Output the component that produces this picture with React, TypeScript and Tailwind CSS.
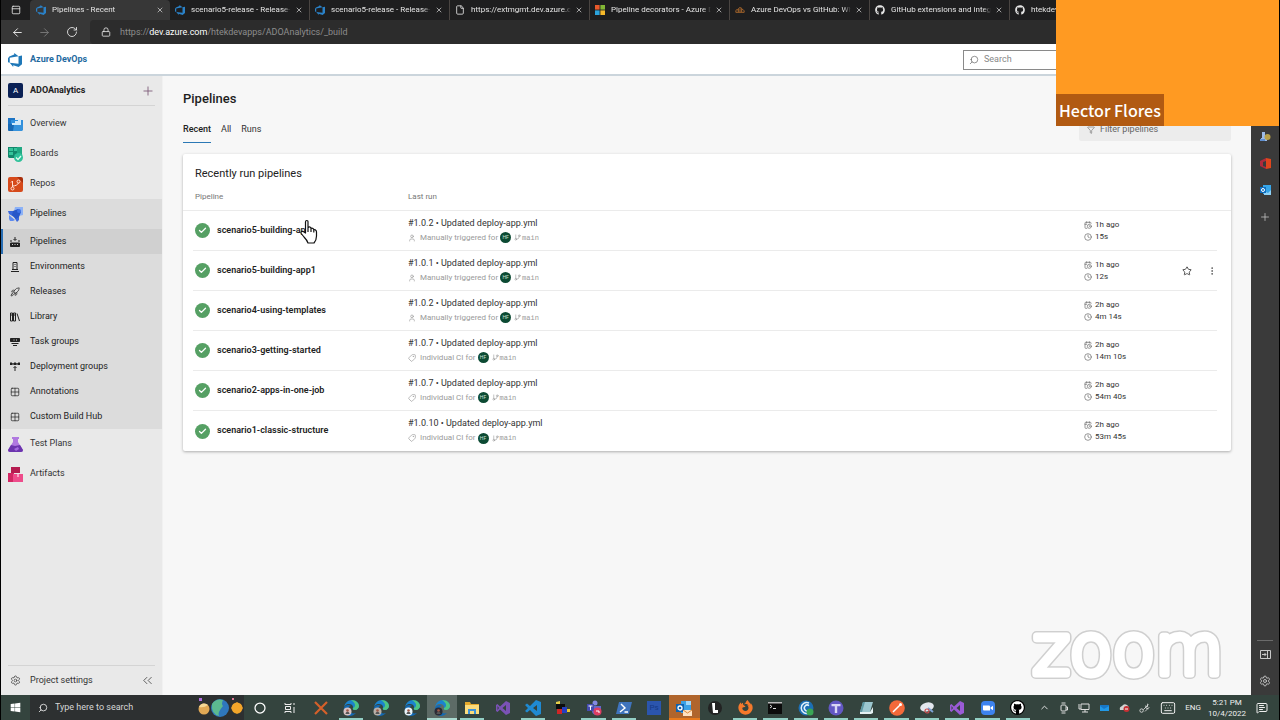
import type { ReactNode } from "react";
import { ArrowLeft, ArrowRight, RotateCw, Lock, X, Plus, Settings, Search, ChevronsLeft, ChevronUp, Star, EllipsisVertical, Filter, User, Tag, GitBranch, Clock, CalendarClock, Rocket, Grid2x2, Check, Keyboard, PanelTop, File, Circle, MessageSquareText } from "lucide-react";
import { FaGithub, FaWindows, FaFirefoxBrowser } from "react-icons/fa";

function DevOpsLogo({ className }: { className: string }) {
  return (
    <svg viewBox="0 0 24 24" className={className} fill="currentColor" aria-hidden="true">
      <path d="M0 8.877L2.247 5.91l8.405-3.416V.022l7.37 5.393L2.966 8.338v8.225L0 15.707zm24-4.45v14.651l-5.753 4.9-9.303-3.057v3.056l-5.978-7.416 15.057 1.798V5.415z" />
    </svg>
  );
}

function MicrosoftLogo() {
  return (
    <svg viewBox="0 0 10 10" className="size-[10px]" aria-hidden="true">
      <path fill="#e8592b" d="M0 0h4.6v4.6H0z" />
      <path fill="#83b735" d="M5.4 0H10v4.6H5.4z" />
      <path fill="#2ba3dd" d="M0 5.4h4.6V10H0z" />
      <path fill="#f6b92a" d="M5.4 5.4H10V10H5.4z" />
    </svg>
  );
}

const cloud = (
  <svg viewBox="0 0 12 8" className="h-2 w-3" fill="none" stroke="#b8702e" strokeWidth="1" aria-hidden="true">
    <path d="M1 6.8h10V5L9.300 3.200 8 4V1.800L5.500 1 4 2.500V4L2 3.500 1 5zM4 4v2.500M6 2v4.500M8 4v2.500" />
  </svg>
);

const tabs: { title: string; icon: ReactNode }[] = [
  { title: "Pipelines - Recent", icon: <DevOpsLogo className="size-[10px] text-[#2a82c9]" /> },
  { title: "scenario5-release - Release-3", icon: <DevOpsLogo className="size-[10px] text-[#2a82c9]" /> },
  { title: "scenario5-release - Release-3", icon: <DevOpsLogo className="size-[10px] text-[#2a82c9]" /> },
  { title: "https://extmgmt.dev.azure.co", icon: <File className="size-[10px]" /> },
  { title: "Pipeline decorators - Azure D", icon: <MicrosoftLogo /> },
  { title: "Azure DevOps vs GitHub: Wh", icon: cloud },
  { title: "GitHub extensions and integr", icon: <FaGithub className="size-[10px]" /> },
  { title: "htekdevapps", icon: <FaGithub className="size-[10px]" /> },
];

function BrowserChrome() {
  return (
    <header className="shrink-0 bg-[#1e1e1f] text-[#e4e4e4]">
      <div className="flex h-5 overflow-hidden">
        <button aria-label="Tab actions" className="flex w-[29px] shrink-0 items-center justify-center">
          <PanelTop className="size-[10px]" />
        </button>
        {tabs.map((tab, i) => (
          <div
            key={i}
            className={
              i === 0
                ? "flex w-[140px] shrink-0 items-center gap-[6px] rounded-t-sm bg-[#373737] pr-[6px] pl-[6px]"
                : "flex w-[140px] shrink-0 items-center gap-[6px] border-r border-[#4a4542] pr-[6px] pl-[5px]"
            }
          >
            <span className="flex w-[10px] shrink-0 justify-center">{tab.icon}</span>
            <span className="min-w-0 flex-1 mask-r-from-92% text-[8px] whitespace-nowrap">{tab.title}</span>
            <button aria-label="Close tab" className="-ml-[2px]">
              <X className="size-2" />
            </button>
          </div>
        ))}
      </div>
      <div className="flex h-6 items-center bg-[#373737]">
        <button aria-label="Back" className="ml-[10px]"><ArrowLeft className="size-[13px]" strokeWidth={1.800} /></button>
        <button aria-label="Forward" className="ml-[14px] text-[#777]"><ArrowRight className="size-[13px]" strokeWidth={1.800} /></button>
        <button aria-label="Refresh" className="ml-[15px]"><RotateCw className="size-[12px]" strokeWidth={1.800} /></button>
        <div className="ml-3 flex h-full flex-1 items-center gap-[9px] rounded-l-sm bg-[#2c2c2c] pl-[11px]">
          <Lock className="size-[10px]" />
          <p className="pt-px text-[9px] text-[#8c8c8c]">
            https://<span className="text-white">dev.azure.com</span>/htekdevapps/ADOAnalytics/_build
          </p>
        </div>
      </div>
    </header>
  );
}

const icon15 = "size-[15px] shrink-0";
const hubs = {
  overview: (
    <svg viewBox="0 0 15 15" className={icon15} aria-hidden="true">
      <path fill="#1d74c4" d="M0 1h7v6H0z" /><path fill="#2f8fdd" d="M3 3h12v9H3z" /><path fill="#1668b4" d="M0 7h8l6 7H1a1 1 0 0 1-1-1z" /><path fill="#3592dc" d="M6 8h9v5l-1 1H5z" /><path fill="#cfe9fb" d="M4 8V6h3V4h3V2h3v6z" />
    </svg>
  ),
  boards: (
    <svg viewBox="0 0 15 15" className={icon15} aria-hidden="true">
      <path fill="#12876c" d="M0 0h14v11H1l-1-1z" /><path fill="#35c49b" d="M1 1h4v3H1zM6 1h3v3H6zM1 5h4v3H1z" /><path fill="#20a883" d="M9 0h5v8H9z" /><circle cx="10.500" cy="10.500" r="4.500" fill="#2fc19a" /><path d="m8 10.500 2 2 3-3.500" fill="none" stroke="#dcfff3" strokeWidth="1.300" />
    </svg>
  ),
  repos: (
    <svg viewBox="0 0 15 15" className={icon15} aria-hidden="true">
      <path fill="#d64a1b" d="M2 0h8l5 5v8a2 2 0 0 1-2 2H2a2 2 0 0 1-2-2V2a2 2 0 0 1 2-2z" /><path fill="#a92f0c" d="M9 0h4a2 2 0 0 1 2 2v4z" /><g fill="none" stroke="#ffe0d3" strokeWidth="1"><circle cx="10.500" cy="4.500" r="1.500" /><circle cx="4.500" cy="11.500" r="1.500" /><path d="M4.500 10V4M4.500 9c3 0 5-1 6-3M4.500 4 3 5.500" /></g>
    </svg>
  ),
  pipelines: (
    <svg viewBox="0 0 15 15" className={icon15} aria-hidden="true">
      <path fill="#8db2f6" d="M7 0h8v8l-4 1-5-5z" /><path fill="#3a68dc" d="M0 4h7l4 4v5l-2 2-3-5-5-3z" /><path fill="#2857c8" d="M5 4l5-2 3 3-2 5-3 2-4-4z" /><circle cx="11" cy="4" r="2" fill="#3f73e6" /><path fill="#5d8af0" d="m1 8 6 5-2 1H2L1 12z" />
    </svg>
  ),
  test: (
    <svg viewBox="0 0 15 15" className={icon15} aria-hidden="true">
      <path fill="#b079e0" d="M4 0h7v2h-1v3l5 8q0 2-2 2H2q-2 0-2-2l5-8V2H4z" /><path fill="#6c35ae" d="m3 8 4 1 5-1 3 5q0 2-2 2H2q-2 0-2-2z" /><path fill="#a46be0" d="m6 12 4-2 1 2-3 2z" />
    </svg>
  ),
  artifacts: (
    <svg viewBox="0 0 15 15" className={icon15} aria-hidden="true">
      <path fill="#b51c50" d="M3 0h9v6H3z" /><path fill="#d32663" d="M0 6h6v9H0z" /><path fill="#ee4c8b" d="M5 7h10v8H5z" /><path fill="#f9a2c4" d="M9 7h2v3H9z" />
    </svg>
  ),
};

const sub = "size-[10px] shrink-0";
const stroke = { fill: "none", stroke: "currentColor", strokeWidth: 1 };
const subIcons = {
  pipelines: <svg viewBox="0 0 10 10" className={sub} {...stroke} aria-hidden="true"><path d="M5 0v3M3.500 2 5 3.500 6.500 2M1 3v2M9 3v2" /><path fill="currentColor" d="M.5 6h9v3.500h-9z" /><path stroke="#d0d0d0" d="M2 7.500h1M4.500 7.500h1M7 7.500h1" /></svg>,
  env: <svg viewBox="0 0 10 10" className={sub} {...stroke} aria-hidden="true"><path d="M3 7V.5h4V7M4.500 2.500h1M4.500 4.500h1M1 9.500h8M2 7.500h6" /></svg>,
  library: <svg viewBox="0 0 10 10" className={sub} {...stroke} aria-hidden="true"><path d="M.5 1h2v8h-2zM3.500 1h2v8h-2zM7 1.500l2.500 7.500M.5 3h2M3.500 3h2" /></svg>,
  task: <svg viewBox="0 0 10 10" className={sub} {...stroke} aria-hidden="true"><path fill="currentColor" d="M.5 1.500h9v3h-9z" /><path d="M1.500 6.500h7M3 8.500h4" /><path stroke="#ddd" d="M3.500 3h1M6 3h1" /></svg>,
  deploy: <svg viewBox="0 0 10 10" className={sub} {...stroke} aria-hidden="true"><path fill="currentColor" d="M0 1h2v1.500H0zM4 1h2v1.500H4zM8 1h2v1.500H8z" /><path d="M2 2h6M5 9V4.500M3.500 6 5 4.500 6.500 6" /></svg>,
};

const buildLinks: { label: string; icon: ReactNode }[] = [
  { label: "Pipelines", icon: subIcons.pipelines },
  { label: "Environments", icon: subIcons.env },
  { label: "Releases", icon: <Rocket className={sub} strokeWidth={1.700} /> },
  { label: "Library", icon: subIcons.library },
  { label: "Task groups", icon: subIcons.task },
  { label: "Deployment groups", icon: subIcons.deploy },
  { label: "Annotations", icon: <Grid2x2 className={sub} strokeWidth={1.700} /> },
  { label: "Custom Build Hub", icon: <Grid2x2 className={sub} strokeWidth={1.700} /> },
];

function HubLink({ icon, label }: { icon: ReactNode; label: string }) {
  return (
    <a href="#" className="flex h-[30px] items-center gap-[7px] pl-[7px]">
      {icon}
      {label}
    </a>
  );
}

function Sidebar() {
  return (
    <nav className="flex w-[162px] shrink-0 flex-col border-r border-[#f1f1f1] bg-[#e9e9e9] text-[9px] text-[#333]">
      <div className="mx-[7px] flex h-[30px] items-center gap-[7px] border-b border-[#d4d4d4]">
        <span className="flex size-[15px] items-center justify-center rounded-xs bg-[#0b2155] text-[8px] text-white">A</span>
        <a href="#" className="font-bold text-[#222]">ADOAnalytics</a>
        <button aria-label="New" className="ml-auto text-[#7c5a78]"><Plus className="size-[14px]" strokeWidth={1.500} /></button>
      </div>
      <div className="mt-[3px]">
        <HubLink icon={hubs.overview} label="Overview" />
        <HubLink icon={hubs.boards} label="Boards" />
        <HubLink icon={hubs.repos} label="Repos" />
      </div>
      <div className="bg-[#dcdcdc] text-[#222]">
        <HubLink icon={hubs.pipelines} label="Pipelines" />
        {buildLinks.map((link, i) => (
          <a
            key={link.label}
            href="#"
            className={
              i === 0
                ? "flex h-[25px] items-center gap-[10px] border-l-2 border-[#2a6fb4] bg-[#d0d0d0] pl-[7px]"
                : "flex h-[25px] items-center gap-[10px] pl-[9px]"
            }
          >
            {link.icon}
            {link.label}
          </a>
        ))}
      </div>
      <HubLink icon={hubs.test} label="Test Plans" />
      <HubLink icon={hubs.artifacts} label="Artifacts" />
      <div className="mx-[7px] mt-auto flex h-[30px] items-center gap-[9px] border-t border-[#d4d4d4] pl-[2px]">
        <Settings className="size-[11px]" strokeWidth={1.500} />
        <a href="#">Project settings</a>
        <button aria-label="Collapse" className="ml-auto"><ChevronsLeft className="size-[15px]" strokeWidth={1.200} /></button>
      </div>
    </nav>
  );
}

const runs = [
  { name: "scenario5-building-app", build: "#1.0.2", manual: true, ago: "1h ago", took: "15s" },
  { name: "scenario5-building-app1", build: "#1.0.1", manual: true, ago: "1h ago", took: "12s", hovered: true },
  { name: "scenario4-using-templates", build: "#1.0.2", manual: true, ago: "2h ago", took: "4m 14s" },
  { name: "scenario3-getting-started", build: "#1.0.7", manual: false, ago: "2h ago", took: "14m 10s" },
  { name: "scenario2-apps-in-one-job", build: "#1.0.7", manual: false, ago: "2h ago", took: "54m 40s" },
  { name: "scenario1-classic-structure", build: "#1.0.10", manual: false, ago: "2h ago", took: "53m 45s" },
];

function RunsTable() {
  return (
    <section className="mt-[11px] rounded-xs bg-white shadow-[0_1px_3px_rgba(0,0,0,0.3)]">
      <h2 className="flex h-[33px] items-end pl-3 text-[11px] text-[#222]"><span className="pb-[5px]">Recently run pipelines</span></h2>
      <table className="w-full table-fixed border-separate border-spacing-0 text-left">
        <colgroup>
          <col className="w-[10px]" />
          <col className="w-[215px]" />
          <col />
          <col className="w-[98px]" />
          <col className="w-[35px]" />
          <col className="w-[14px]" />
        </colgroup>
        <thead>
          <tr className="h-6 text-[8px] text-[#777] *:border-b *:border-[#ebebeb] *:p-0 *:font-normal">
            <td />
            <th scope="col"><span className="block pb-[4px] pl-[2px]">Pipeline</span></th>
            <th scope="col"><span className="block pb-[4px]">Last run</span></th>
            <td />
            <td />
            <td />
          </tr>
        </thead>
        <tbody className="[&>tr:last-child>td]:border-0">
          {runs.map((run) => (
            <tr key={run.name} className="h-10 *:p-0">
              <td />
              <td className="border-b border-[#ebebeb]">
                <div className="flex items-center gap-[7px] pl-[2px]">
                  <span className="flex size-[15px] items-center justify-center rounded-full bg-[#56a064] text-white">
                    <Check className="size-[9px]" strokeWidth={3.500} />
                  </span>
                  <a href="#" className="text-[9px] font-semibold text-[#222]">{run.name}</a>
                </div>
              </td>
              <td className="border-b border-[#ebebeb]">
                <a href="#" className="block text-[9px] leading-[14px] text-[#333]">{run.build} • Updated deploy-app.yml</a>
                <div className="flex items-center text-[8px] leading-4 text-[#9a9a9a]">
                  {run.manual ? <User className="mr-1 size-2" /> : <Tag className="mr-1 size-2 -scale-x-100" />}
                  {run.manual ? "Manually triggered for" : "Individual CI for"}
                  <span className="mr-[3px] ml-[2px] flex size-[11px] items-center justify-center rounded-full bg-[#0c4a33] text-[5px] leading-none text-[#cfe3d8]">HF</span>
                  <GitBranch className="mr-px size-[7px]" />
                  <span className="font-['Liberation_Mono',monospace] text-[7px]">main</span>
                </div>
              </td>
              <td className="border-b border-[#ebebeb]">
                <div className="text-[8px] leading-3 text-[#333]">
                  <p className="flex items-center gap-[3px]"><CalendarClock className="size-2 text-[#666]" />{run.ago}</p>
                  <p className="flex items-center gap-[3px]"><Clock className="size-2 text-[#666]" />{run.took}</p>
                </div>
              </td>
              <td className="border-b border-[#ebebeb]">
                {run.hovered && (
                  <div className="flex items-center justify-between text-[#333]">
                    <button aria-label="Favorite"><Star className="size-[10px]" /></button>
                    <button aria-label="More actions"><EllipsisVertical className="size-[10px]" strokeWidth={1.500} /></button>
                  </div>
                )}
              </td>
              <td />
            </tr>
          ))}
        </tbody>
      </table>
    </section>
  );
}

function EdgeRail() {
  return (
    <aside className="flex w-7 shrink-0 flex-col items-center bg-[#3a3a3a] text-[#c8c8c8]">
      <div className="mt-[88px] flex flex-col items-center gap-[16px]">
        <svg viewBox="0 0 11 10" className="h-[10px] w-[11px]" aria-hidden="true"><path fill="#9dbbe8" d="M2 0h3v5h2v4H1V6h1z" /><circle cx="7.500" cy="5" r="3" fill="#b9a04a" /><path fill="#5f8fd0" d="M0 7h5v2H0z" /></svg>
        <svg viewBox="0 0 11 11" className="size-[11px]" aria-hidden="true"><path fill="#e0461c" d="m6 0 5 1v9l-5 1z" /><path fill="#b02a3c" d="M0 3l6-3v3L3 4v4l3 1v2L0 8z" /></svg>
        <svg viewBox="0 0 11 10" className="h-[10px] w-[11px]" aria-hidden="true"><path fill="#36a5e8" d="M3 0h8v9H3z" /><path fill="#8fd3f8" d="m4 6 4 2 3-3v5H4z" /><path fill="#0f6cbd" d="M0 2h6v6H0z" /><circle cx="3" cy="5" r="1.500" fill="none" stroke="#fff" /></svg>
        <button aria-label="Add app"><Plus className="size-3" strokeWidth={1.500} /></button>
      </div>
      <div className="mt-auto mb-[8px] flex flex-col items-center">
        <hr className="w-4 border-[#6b6b6b]" />
        <button aria-label="Hide sidebar" className="mt-[9px]">
          <svg viewBox="0 0 11 9" className="h-[9px] w-[11px]" fill="none" stroke="currentColor" aria-hidden="true"><path d="M.5.500h10v8H.500zM7.500.500v8M2 4.500h4M4.500 3 6 4.500 4.500 6" /></svg>
        </button>
        <button aria-label="Sidebar settings" className="mt-[16px]"><Settings className="size-3" strokeWidth={1.800} /></button>
      </div>
    </aside>
  );
}

const t = "size-4";
function EdgeIcon({ badge }: { badge: string }) {
  return (
    <svg viewBox="0 0 16 16" className={t} aria-hidden="true">
      <path fill="#1a83cf" d="M1 9C1 3 5 0 9 0c4 0 7 3 7 6 0 2-2 4-4 4-3 0-2-2-2-3 0-2-2-3-4-3-3 0-5 2-5 5z" /><path fill="#4ec481" d="M8 0c5 0 8 3 8 6 0 2-2 4-4 4-2 0-2.500-1-2-2 3-1 3-5-2-8z" /><path fill="#1269b5" d="M1 8c1-3 5-4 7-2-2 0-3 2-2 4 1 3 4 4 7 3-2 2-4 3-6 3-4 0-7-4-6-8z" /><circle cx="4.500" cy="11.500" r="4" fill={badge} /><circle cx="4.500" cy="10.500" r="1.300" fill="#a05a4a" /><path fill="#555" d="M2.500 14c0-3 4-3 4 0z" />
    </svg>
  );
}

function Studio({ color }: { color: string }) {
  return <svg viewBox="0 0 16 16" className={t} aria-hidden="true"><path fill={color} fillRule="evenodd" d="m11 1 4 2v10l-4 2-6-5.500L2.500 12 1 11V5l1.500-1L5 6.500zM11 5 7.500 8 11 11zM2.500 6v4L4 8z" /></svg>;
}

const apps: { name: string; icon: ReactNode; state?: "open" | "active" | "alert" }[] = [
  { name: "Cortana", icon: <Circle className="size-3 text-white" strokeWidth={2.500} /> },
  { name: "Task view", icon: <svg viewBox="0 0 12 12" className="size-3" fill="none" stroke="#eee" aria-hidden="true"><path d="M1 1v1.500h6V1M1 11V9.500h6V11M1.500 4.500h5v3h-5zM10 1v2M10 5v6" /></svg> },
  { name: "Tools", icon: <svg viewBox="0 0 16 16" className={t} stroke="#d5602a" strokeWidth="2.200" aria-hidden="true"><path d="m2 2 12 12M14 2 2 14" /></svg> },
  { name: "Edge Personal", icon: <EdgeIcon badge="#d8c2c2" />, state: "open" },
  { name: "Edge Work", icon: <EdgeIcon badge="#b9b0a8" /> },
  { name: "Edge Beta", icon: <EdgeIcon badge="#e8f4fa" /> },
  { name: "Edge", icon: <EdgeIcon badge="#2b2b35" />, state: "active" },
  { name: "File Explorer", icon: <svg viewBox="0 0 16 16" className={t} aria-hidden="true"><path fill="#e5a92c" d="M1 2h5l1 2h8v10H1z" /><path fill="#fbdc7c" d="M1 5h14v9H1z" /><path fill="#3e93d8" d="M4 14V9h8v5h-2v-3H6v3z" /></svg>, state: "open" },
  { name: "Visual Studio 2019", icon: <Studio color="#7a52b5" /> },
  { name: "VS Code", icon: <svg viewBox="0 0 16 16" className={t} aria-hidden="true"><path fill="#1f8ad2" fillRule="evenodd" d="m11 0 5 2v12l-5 2-6-6-3 2.500L0 11l3-3-3-3 2-1.500L5 6zm1 5L8 8l4 3z" /></svg>, state: "open" },
  { name: "Devices", icon: <svg viewBox="0 0 16 16" className={t} aria-hidden="true"><path fill="#e8d04a" d="M1 2l4-1v3H1z" /><path fill="#0d0d0d" d="M1 4h9v5H1z" /><path fill="#cf2626" d="M2 9h5v5H2z" /><path fill="#253fc0" d="M7 7h5v6H7z" /><path fill="#e9c72b" d="M12 9h3v3h-3z" /></svg> },
  { name: "Teams", icon: <svg viewBox="0 0 16 16" className={t} aria-hidden="true"><circle cx="9" cy="3" r="2.500" fill="#8389e0" /><path fill="#6169cc" d="M6 6h9v5q-1 4-5 4-4-1-4-4z" /><path fill="#454cb0" d="M1 4h7v7H1z" /><path stroke="#fff" d="M2.500 6h4M4.500 6v4" /><circle cx="11.500" cy="11.500" r="4" fill="#dc3e63" /><path stroke="#fff" d="M10 11h3v2" fill="none" /></svg>, state: "open" },
  { name: "PowerShell", icon: <svg viewBox="0 0 16 16" className={t} aria-hidden="true"><path fill="#3f74bd" d="M3 2h13l-3 12H0z" /><path d="m5 4 4 4-5 4M8.500 12H12" fill="none" stroke="#fff" strokeWidth="1.400" /></svg>, state: "open" },
  { name: "Photoshop", icon: <span className="flex size-[14px] items-center justify-center bg-[#2b55ae] text-[8px] text-[#163a86]">Ps</span> },
  { name: "Outlook", icon: <svg viewBox="0 0 16 16" className={t} aria-hidden="true"><path fill="#3aa0e4" d="M5 1h10v12H5z" /><path fill="#9fd6f7" d="M10 1h5v4h-5z" /><path fill="#0f62b1" d="M0 4h8v8H0z" /><circle cx="4" cy="8" r="2" fill="none" stroke="#fff" strokeWidth="1.300" /><path fill="#ffe2c0" d="M7 10h9v6H7z" /><path d="m7 10 4.500 3L16 10" fill="none" stroke="#d98a3d" /></svg>, state: "alert" },
  { name: "Launcher", icon: <svg viewBox="0 0 16 16" className={t} aria-hidden="true"><circle cx="8" cy="8" r="7" fill="#222" /><path fill="#fff" d="M5 3h3v7h3v3H6z" /></svg> },
  { name: "Firefox", icon: <FaFirefoxBrowser className="size-[15px] text-[#f5792c]" />, state: "open" },
  { name: "Command Prompt", icon: <svg viewBox="0 0 16 16" className={t} aria-hidden="true"><path fill="#0c0c0c" d="M1 2h14v12H1z" /><path fill="#b9b9b9" d="M1 2h14v1.500H1z" /><path d="m3 5 2 1.500L3 8M6 8.500h3" fill="none" stroke="#ddd" /></svg>, state: "open" },
  { name: "Remote", icon: <svg viewBox="0 0 16 16" className={t} aria-hidden="true"><circle cx="8" cy="8" r="7.500" fill="#1c6fb5" /><path d="M11 3a5.500 5.500 0 1 0 0 10M11 5.500a3 3 0 1 0 0 5" fill="none" stroke="#e2f1fb" strokeWidth="1.500" /><circle cx="12" cy="12" r="3.500" fill="#3aa655" /></svg>, state: "open" },
  { name: "Teams for home", icon: <svg viewBox="0 0 16 16" className={t} aria-hidden="true"><circle cx="8" cy="8" r="7.500" fill="#6358c4" /><path fill="#d9d6f5" d="M3.500 4h9v2.200H9.200V13H6.800V6.200H3.500z" /></svg>, state: "open" },
  { name: "Notepad", icon: <svg viewBox="0 0 16 16" className={t} aria-hidden="true"><path fill="#9cc7cf" d="M5 2h10l-3 10H2z" /><path fill="#e4f1f3" d="M2 12h10l3-5v6l-2 1H2z" /><path fill="#5d98a3" d="m2 12 3-10h2L4 12z" /></svg>, state: "open" },
  { name: "Postman", icon: <svg viewBox="0 0 16 16" className={t} aria-hidden="true"><circle cx="8" cy="8" r="7.800" fill="#f4693a" /><path d="m4 12 6-6M10 6l2-1.500" stroke="#fff" strokeWidth="1.500" /><circle cx="11.500" cy="4.500" r="1.500" fill="#fff" /></svg>, state: "open" },
  { name: "Snip", icon: <svg viewBox="0 0 16 16" className={t} aria-hidden="true"><ellipse cx="8" cy="7" rx="7" ry="4.500" fill="#e3e7ee" transform="rotate(-15 8 7)" /><path d="m9 8 5 4" fill="none" stroke="#7fa3d6" strokeWidth="2" /><circle cx="8" cy="11" r="2" fill="none" stroke="#c94c4c" strokeWidth="1.200" /></svg>, state: "open" },
  { name: "Visual Studio", icon: <Studio color="#9a5bd6" />, state: "open" },
  { name: "Zoom", icon: <svg viewBox="0 0 16 16" className={t} aria-hidden="true"><rect x="1" y="1" width="14" height="14" rx="4" fill="#3d83ef" /><path fill="#fff" d="M3 5.500h6q1 0 1 1v4H4q-1 0-1-1zM10.500 7.500 13 5.700v4.600l-2.500-1.800z" /></svg>, state: "open" },
  { name: "GitHub Desktop", icon: <span className="flex size-[15px] items-center justify-center rounded-full bg-black"><FaGithub className="size-[13px] text-white" /></span>, state: "open" },
];

function Taskbar() {
  return (
    <footer className="flex h-[25px] shrink-0 bg-[#34443e] text-[#eee]">
      <button aria-label="Start" className="flex w-[29px] shrink-0 items-center justify-center text-white"><FaWindows className="size-[11px]" /></button>
      <label className="flex w-[214px] shrink-0 items-center gap-[7px] bg-[#2d3031] pl-2">
        <Search className="size-[10px] -scale-x-100" />
        <input aria-label="Search" placeholder="Type here to search" className="min-w-0 flex-1 bg-transparent text-[9px] placeholder:text-[#d6d6d6]" />
        <svg viewBox="0 0 46 22" className="h-[22px] w-[46px]" aria-hidden="true">
          <circle cx="6" cy="12" r="5.500" fill="#e2a955" /><path fill="#f6d896" d="M1 10a5.500 5.500 0 0 1 9-2q-4 3-9 2z" /><circle cx="22" cy="11" r="9" fill="#2f77bd" /><path fill="#5cb98f" d="M14 7q4-6 11-4-2 4 0 6-6 7-4 10-8-2-7-12z" /><circle cx="39" cy="11" r="5.500" fill="#f2a52a" /><path stroke="#f2a52a" strokeWidth="1" d="M39 5v12M33 11h12M35 7l8 8M43 7l-8 8" /><path fill="#b06fe0" d="M1 1h3v3H1z" /><path fill="#e27a9a" d="M34 1h2v2h-2z" />
        </svg>
      </label>
      <div className="ml-px grid w-[788px] shrink-0 auto-cols-fr grid-flow-col">
        {apps.map((app) => (
          <button
            key={app.name}
            aria-label={app.name}
            className={
              app.state === "alert"
                ? "flex items-center justify-center border-b-2 border-[#e87a1c] bg-[#b0652c] pt-[2px]"
                : app.state === "active"
                  ? "flex items-center justify-center border-b-2 border-[#a9d9cf] bg-[#5d6b66] pt-[2px]"
                  : app.state === "open"
                    ? "mx-[3px] flex items-center justify-center border-b-2 border-[#93cfc4] pt-[2px]"
                    : "flex items-center justify-center"
            }
          >
            {app.icon}
          </button>
        ))}
      </div>
      <div className="ml-auto flex items-center pr-[11px] text-[8px]">
        <span className="flex items-center gap-[9px]">
          <ChevronUp className="size-[11px]" />
          <svg viewBox="0 0 10 12" className="h-3 w-[10px]" fill="none" stroke="#ddd" aria-hidden="true"><rect x="2" y="3" width="5" height="6" rx="1" /><path d="M7 5h1.500v3H7M2.500 1h4M2.500 11h4" /></svg>
          <svg viewBox="0 0 12 10" className="h-[10px] w-3" fill="none" stroke="#ddd" aria-hidden="true"><path d="M3 1h8v5.500H3zM7 7v2M4 9h6M1 1v5h2" /></svg>
          <svg viewBox="0 0 11 8" className="h-2 w-[11px]" aria-hidden="true"><path fill="#2299e6" d="M1 2h9v5H1z" /><path fill="#1777c5" d="M1 2l4 3 5-3V1H1z" /></svg>
          <svg viewBox="0 0 11 9" className="h-[9px] w-[11px]" aria-hidden="true"><path fill="#d3d3d3" d="M1 7q-1-3 2-4 2-3 5-1 2 1 2 5z" /><circle cx="7.500" cy="6" r="3" fill="#c73034" /><path stroke="#fff" d="M6 6h3" /></svg>
          <svg viewBox="0 0 14 12" className="h-3 w-[12px]" fill="none" stroke="#ddd" aria-hidden="true"><circle cx="3" cy="9" r="2" /><path d="M5 8 11 2M7 10l5-5M8 3v3l3 1M10 1v4" /></svg>
          <Keyboard className="size-4" strokeWidth={1.500} />
          <span>ENG</span>
        </span>
        <p className="ml-[6px] w-[40px] text-center leading-[11px]">5:21 PM<br />10/4/2022</p>
        <MessageSquareText className="ml-[9px] size-[12px]" />
      </div>
    </footer>
  );
}

export default function App() {
  return (
    <div className="relative flex min-h-screen flex-col overflow-hidden bg-black px-px font-['Roboto','Open_Sans',sans-serif]">
      <BrowserChrome />
      <div className="flex flex-1">
        <div className="flex min-w-0 flex-1 flex-col">
          <header className="flex h-8 shrink-0 items-center border-b-2 border-[#cbd5dc] bg-white pt-[2px]">
            <DevOpsLogo className="ml-[7px] size-[14px] text-[#1f78b8]" />
            <a href="#" className="ml-[8px] text-[9px] font-bold text-[#1f6a9f]">Azure DevOps</a>
            <label className="mr-[68px] ml-auto flex h-5 w-[220px] items-center gap-[5px] border border-[#8a8a8a] pl-[5px]">
              <Search className="size-[10px] -scale-x-100 text-[#555]" strokeWidth={1.500} />
              <input aria-label="Search" placeholder="Search" className="min-w-0 flex-1 text-[9px] placeholder:text-[#888]" />
            </label>
          </header>
          <div className="flex flex-1">
            <Sidebar />
            <main className="min-w-0 flex-1 bg-[#f7f7f7] pr-5 pl-5">
              <h1 className="pt-[13px] text-[13px] leading-5 font-medium text-[#1e1e1e]">Pipelines</h1>
              <div className="mt-[10px] flex h-[24px] items-start justify-between">
                <div className="flex h-full gap-[10px] text-[9px] leading-[13px] text-[#333]">
                  <button className="flex border-b border-[#2b78b5] pt-[4px] font-medium text-[#222]">Recent</button>
                  <button className="flex pt-[4px]">All</button>
                  <button className="flex pt-[4px]">Runs</button>
                </div>
                <label className="flex h-[22px] w-[152px] items-center gap-[5px] rounded-xs bg-[#ececec] pl-[8px]">
                  <Filter className="size-2 text-[#777]" />
                  <input aria-label="Filter pipelines" placeholder="Filter pipelines" className="min-w-0 flex-1 text-[9px] placeholder:text-[#666]" />
                </label>
              </div>
              <RunsTable />
            </main>
          </div>
        </div>
        <EdgeRail />
      </div>
      <Taskbar />

      <div className="absolute top-0 right-px flex h-[126px] w-[223px] items-end bg-[#ff9a22]">
        <span className="flex h-8 items-center bg-[#b15a12] px-[3px] pb-px font-['Noto_Sans_CJK_SC','Noto_Sans',sans-serif] text-base font-medium whitespace-nowrap text-white">Hector Flores</span>
      </div>

      <svg viewBox="0 0 220 120" className="absolute right-[41px] bottom-[5px] h-[120px] w-[220px]" aria-label="zoom">
        <g fontFamily="DejaVu Sans, sans-serif" fontSize="70" fontWeight="200" textAnchor="middle" strokeLinejoin="round">
          <text x="109" y="79" fill="#cfcfcf" stroke="#cfcfcf" strokeWidth="10">zoom</text>
          <text x="109" y="79" fill="#ffffff" stroke="#ffffff" strokeWidth="7" aria-hidden="true">zoom</text>
        </g>
      </svg>

      <svg viewBox="0 0 18 25" className="absolute top-[219px] left-[300px] h-[25px] w-[18px]" fill="#fff" stroke="#111" strokeWidth="1.200" strokeLinejoin="round" aria-hidden="true">
        <path d="M5.500 14V3q0-1.500 1.300-1.500T8 3v6q.5-1.500 2-1 1 .5 1 1.500.8-.8 2 0 .8.500.8 1.500 1-.7 2 .2.700.6.700 1.800v4q0 4-2.500 7H8q-1-3-4-6L1.200 14.500q-.7-1.500.5-2t2 .2zM8 9v4M11 9.500V13M13.800 11v2.500" />
      </svg>
    </div>
  );
}
